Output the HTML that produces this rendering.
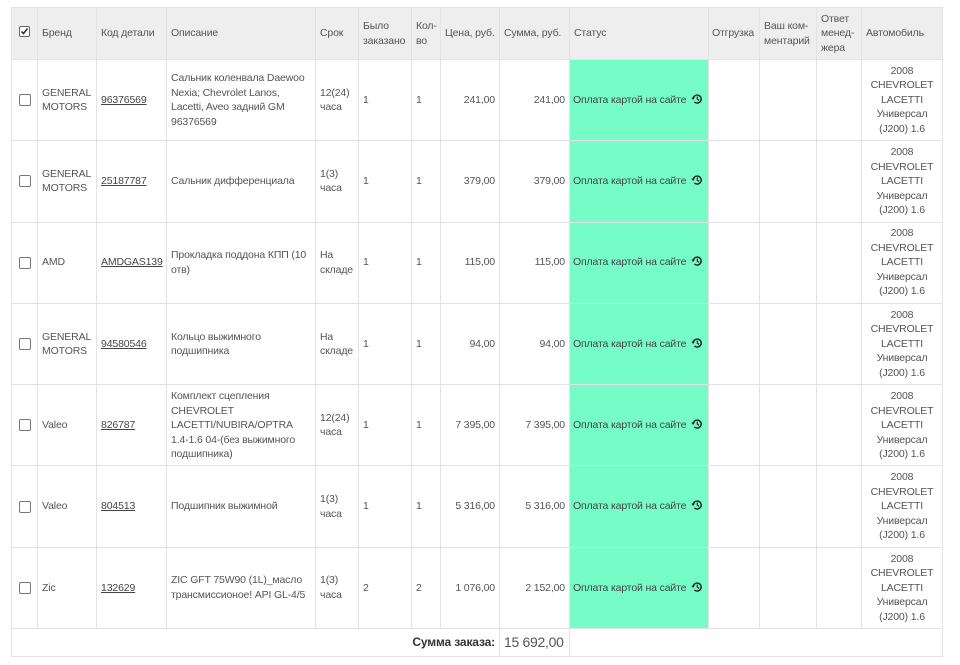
<!DOCTYPE html>
<html><head><meta charset="utf-8">
<style>
html,body{margin:0;padding:0;background:#fff;width:960px;height:665px;overflow:hidden}
body{font-family:"Liberation Sans",Arial,sans-serif;font-size:10.5px;color:#555;letter-spacing:-0.15px}
table{position:absolute;left:11px;top:7px;border-collapse:collapse;table-layout:fixed;width:931px}
td,th{border:1px solid #e3e3e3;padding:0 4px;vertical-align:middle;line-height:14.5px;text-align:left;font-weight:normal;overflow:hidden}
th{background:#eeeeee;height:51px;color:#555}
tr.r td{height:80.3px}
.nw{white-space:nowrap}
.cb{text-align:center;padding:0}
.box{display:inline-block;width:10px;height:10px;border:1px solid #777;border-radius:2px;background:#fff;vertical-align:middle}
.num{text-align:right}
.st{background:#76fdc7;color:#444;padding:0 3px;white-space:nowrap}
.auto{text-align:center}
a{color:#444;text-decoration:underline}
.ic{display:inline-block;vertical-align:-2px;margin-left:5px}
.tot td{height:27px;white-space:nowrap}
</style></head><body>
<table>
<colgroup>
<col style="width:26px"><col style="width:59px"><col style="width:70px"><col style="width:149px"><col style="width:43px"><col style="width:53px"><col style="width:29px"><col style="width:59px"><col style="width:70px"><col style="width:139px"><col style="width:51px"><col style="width:57px"><col style="width:45px"><col style="width:81px">
</colgroup>
<tr>
<th class="cb"><svg width="11" height="11" viewBox="0 0 11 11"><rect x="0.5" y="0.5" width="10" height="10" rx="1.5" fill="#fff" stroke="#666"/><path d="M2.5 5.5l2 2 4-5" stroke="#333" stroke-width="1.6" fill="none"/></svg></th>
<th>Бренд</th><th class="nw">Код детали</th><th>Описание</th><th>Срок</th><th>Было заказано</th><th>Кол-во</th><th class="nw">Цена, руб.</th><th class="nw">Сумма, руб.</th><th>Статус</th><th style="padding:0 3px">Отгрузка</th><th>Ваш ком-ментарий</th><th>Ответ менед-жера</th><th>Автомобиль</th>
</tr>
<tr class="r"><td class="cb"><span class="box"></span></td><td>GENERAL MOTORS</td><td><a>96376569</a></td><td>Сальник коленвала Daewoo Nexia; Chevrolet Lanos, Lacetti, Aveo задний GM 96376569</td><td>12(24) часа</td><td>1</td><td>1</td><td class="num">241,00</td><td class="num">241,00</td><td class="st">Оплата картой на сайте<svg class="ic" width="12" height="12" viewBox="0 0 12 12"><path d="M2.2 6A4 4 0 1 1 3.4 8.9" fill="none" stroke="#222" stroke-width="1.4"/><path d="M0.3 4.6h3.6L2.1 7z" fill="#222"/><path d="M6.3 3.5v2.7l1.8 1.2" fill="none" stroke="#222" stroke-width="1.2"/></svg></td><td></td><td></td><td></td><td class="auto">2008 CHEVROLET LACETTI Универсал (J200) 1.6</td></tr>
<tr class="r"><td class="cb"><span class="box"></span></td><td>GENERAL MOTORS</td><td><a>25187787</a></td><td>Сальник дифференциала</td><td>1(3) часа</td><td>1</td><td>1</td><td class="num">379,00</td><td class="num">379,00</td><td class="st">Оплата картой на сайте<svg class="ic" width="12" height="12" viewBox="0 0 12 12"><path d="M2.2 6A4 4 0 1 1 3.4 8.9" fill="none" stroke="#222" stroke-width="1.4"/><path d="M0.3 4.6h3.6L2.1 7z" fill="#222"/><path d="M6.3 3.5v2.7l1.8 1.2" fill="none" stroke="#222" stroke-width="1.2"/></svg></td><td></td><td></td><td></td><td class="auto">2008 CHEVROLET LACETTI Универсал (J200) 1.6</td></tr>
<tr class="r"><td class="cb"><span class="box"></span></td><td>AMD</td><td><a>AMDGAS139</a></td><td>Прокладка поддона КПП (10 отв)</td><td>На складе</td><td>1</td><td>1</td><td class="num">115,00</td><td class="num">115,00</td><td class="st">Оплата картой на сайте<svg class="ic" width="12" height="12" viewBox="0 0 12 12"><path d="M2.2 6A4 4 0 1 1 3.4 8.9" fill="none" stroke="#222" stroke-width="1.4"/><path d="M0.3 4.6h3.6L2.1 7z" fill="#222"/><path d="M6.3 3.5v2.7l1.8 1.2" fill="none" stroke="#222" stroke-width="1.2"/></svg></td><td></td><td></td><td></td><td class="auto">2008 CHEVROLET LACETTI Универсал (J200) 1.6</td></tr>
<tr class="r"><td class="cb"><span class="box"></span></td><td>GENERAL MOTORS</td><td><a>94580546</a></td><td>Кольцо выжимного подшипника</td><td>На складе</td><td>1</td><td>1</td><td class="num">94,00</td><td class="num">94,00</td><td class="st">Оплата картой на сайте<svg class="ic" width="12" height="12" viewBox="0 0 12 12"><path d="M2.2 6A4 4 0 1 1 3.4 8.9" fill="none" stroke="#222" stroke-width="1.4"/><path d="M0.3 4.6h3.6L2.1 7z" fill="#222"/><path d="M6.3 3.5v2.7l1.8 1.2" fill="none" stroke="#222" stroke-width="1.2"/></svg></td><td></td><td></td><td></td><td class="auto">2008 CHEVROLET LACETTI Универсал (J200) 1.6</td></tr>
<tr class="r"><td class="cb"><span class="box"></span></td><td>Valeo</td><td><a>826787</a></td><td>Комплект сцепления CHEVROLET LACETTI/NUBIRA/OPTRA 1.4-1.6 04-(без выжимного подшипника)</td><td>12(24) часа</td><td>1</td><td>1</td><td class="num">7 395,00</td><td class="num">7 395,00</td><td class="st">Оплата картой на сайте<svg class="ic" width="12" height="12" viewBox="0 0 12 12"><path d="M2.2 6A4 4 0 1 1 3.4 8.9" fill="none" stroke="#222" stroke-width="1.4"/><path d="M0.3 4.6h3.6L2.1 7z" fill="#222"/><path d="M6.3 3.5v2.7l1.8 1.2" fill="none" stroke="#222" stroke-width="1.2"/></svg></td><td></td><td></td><td></td><td class="auto">2008 CHEVROLET LACETTI Универсал (J200) 1.6</td></tr>
<tr class="r"><td class="cb"><span class="box"></span></td><td>Valeo</td><td><a>804513</a></td><td>Подшипник выжимной</td><td>1(3) часа</td><td>1</td><td>1</td><td class="num">5 316,00</td><td class="num">5 316,00</td><td class="st">Оплата картой на сайте<svg class="ic" width="12" height="12" viewBox="0 0 12 12"><path d="M2.2 6A4 4 0 1 1 3.4 8.9" fill="none" stroke="#222" stroke-width="1.4"/><path d="M0.3 4.6h3.6L2.1 7z" fill="#222"/><path d="M6.3 3.5v2.7l1.8 1.2" fill="none" stroke="#222" stroke-width="1.2"/></svg></td><td></td><td></td><td></td><td class="auto">2008 CHEVROLET LACETTI Универсал (J200) 1.6</td></tr>
<tr class="r"><td class="cb"><span class="box"></span></td><td>Zic</td><td><a>132629</a></td><td>ZIC GFT 75W90 (1L)_масло трансмиссионое! API GL-4/5</td><td>1(3) часа</td><td>2</td><td>2</td><td class="num">1 076,00</td><td class="num">2 152,00</td><td class="st">Оплата картой на сайте<svg class="ic" width="12" height="12" viewBox="0 0 12 12"><path d="M2.2 6A4 4 0 1 1 3.4 8.9" fill="none" stroke="#222" stroke-width="1.4"/><path d="M0.3 4.6h3.6L2.1 7z" fill="#222"/><path d="M6.3 3.5v2.7l1.8 1.2" fill="none" stroke="#222" stroke-width="1.2"/></svg></td><td></td><td></td><td></td><td class="auto">2008 CHEVROLET LACETTI Универсал (J200) 1.6</td></tr>
<tr class="tot"><td colspan="8" style="text-align:right;font-weight:bold;font-size:12px;color:#333">Сумма заказа:</td><td style="font-size:14px;color:#555;letter-spacing:-0.3px">15 692,00</td><td colspan="5"></td></tr>
</table>
</body></html>
